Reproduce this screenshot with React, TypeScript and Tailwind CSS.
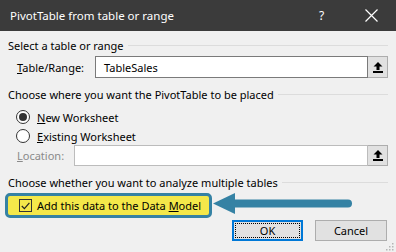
import React from 'react'

const FONT = { fontFamily: '"Noto Sans", "Open Sans", sans-serif' }

function UploadIcon() {
  return (
    <svg width="10" height="11" viewBox="0 0 10 11">
      <path d="M5 0 L9.5 4.5 L6.5 4.5 L6.5 8 L3.5 8 L3.5 4.5 L0.5 4.5 Z" fill="#000" />
      <rect x="0" y="9" width="10" height="2" fill="#000" />
    </svg>
  )
}

function SectionHeader({ label, className = '' }: { label: string; className?: string }) {
  return (
    <div className={`flex items-center h-[16px] gap-[4px] ${className}`}>
      <span className="whitespace-nowrap text-[#000]">{label}</span>
      <div className="flex-1 h-px bg-[#dcdcdc] mt-[1px]" />
    </div>
  )
}

function Radio({ checked }: { checked?: boolean }) {
  return (
    <div className="w-[14px] h-[14px] rounded-full border border-[#333] bg-white flex items-center justify-center">
      {checked && <div className="w-[8px] h-[8px] rounded-full bg-[#333]" />}
    </div>
  )
}

export default function App() {
  return (
    <div className="w-[396px] h-[252px] overflow-hidden text-[11px] leading-none" style={FONT}>

      {/* Title bar */}
      <div className="h-[31px] bg-[#3b3b3b] flex items-center pl-[10px] text-white">
        <span className="text-[11.5px] flex-1 whitespace-nowrap">PivotTable from table or range</span>
        <span className="text-[12px] w-[12px] mr-[34px]">?</span>
        <svg width="13" height="13" viewBox="0 0 13 13" className="mr-[18px]">
          <path d="M0.5 0.5 L12.5 12.5 M12.5 0.5 L0.5 12.5" stroke="#fff" strokeWidth="1.2" />
        </svg>
      </div>

      {/* Body */}
      <div className="h-[221px] bg-[#f0f0f0] px-[8px] flex flex-col relative">

        <SectionHeader label="Select a table or range" className="mt-[6px]" />

        {/* Table/Range */}
        <div className="flex items-center mt-[3px] h-[22px] pl-[9px]">
          <span className="w-[78px] whitespace-nowrap"><u>T</u>able/Range:</span>
          <div className="flex-1 h-full bg-white border border-[#7a7a7a] flex items-center pl-[8px]">
            TableSales
          </div>
          <div className="w-[20px] h-full bg-[#e1e1e1] border border-[#adadad] border-l-0 flex items-center justify-center">
            <UploadIcon />
          </div>
        </div>

        <SectionHeader label="Choose where you want the PivotTable to be placed" className="mt-[8px]" />

        {/* Radios */}
        <div className="flex items-center h-[16px] mt-[7px] pl-[8px] gap-[7px]">
          <Radio checked />
          <span><u>N</u>ew Worksheet</span>
        </div>
        <div className="flex items-center h-[16px] mt-[3px] pl-[8px] gap-[7px]">
          <Radio />
          <span><u>E</u>xisting Worksheet</span>
        </div>

        {/* Location */}
        <div className="flex items-center mt-[1px] h-[21px] pl-[9px]">
          <span className="w-[57px] text-[#8a8a8a]"><u>L</u>ocation:</span>
          <div className="flex-1 h-full bg-white border border-[#bcbcbc]" />
          <div className="w-[20px] h-full bg-[#e1e1e1] border border-[#adadad] border-l-0 flex items-center justify-center">
            <UploadIcon />
          </div>
        </div>

        <SectionHeader label="Choose whether you want to analyze multiple tables" className="mt-[8px]" />

        {/* Highlighted checkbox + arrow */}
        <div className="flex items-center mt-[3px] -ml-[3px] h-[25px]">
          <div className="w-[207px] h-[25px] rounded-[5px] border-[3px] border-[#3582a4] bg-[#f4e84a] flex items-center pl-[11px] gap-[5px]">
            <div className="w-[13px] h-[13px] border border-[#333] flex items-center justify-center">
              <svg width="9" height="8" viewBox="0 0 9 8">
                <path d="M0.8 4 L3.4 6.6 L8.4 0.8" stroke="#222" strokeWidth="1.2" fill="none" />
              </svg>
            </div>
            <span className="whitespace-nowrap">Add this data to the Data <u>M</u>odel</span>
          </div>
          <svg width="142" height="25" viewBox="0 0 142 25" className="-mt-[5px]">
            <path d="M1 12.5 L23 2 L23 23 Z" fill="#3582a4" />
            <line x1="22" y1="12.5" x2="136" y2="12.5" stroke="#3582a4" strokeWidth="8" strokeLinecap="round" />
          </svg>
        </div>

        {/* Buttons */}
        <div className="flex justify-end mt-[2px] pr-[1px] gap-[12px]">
          <div className="w-[71px] h-[21px] bg-[#e1e1e1] border-2 border-[#0078d7] p-[1px]">
            <div className="w-full h-full border border-dotted border-[#000] flex items-center justify-center">OK</div>
          </div>
          <div className="w-[72px] h-[21px] bg-[#e1e1e1] border border-[#adadad] flex items-center justify-center">Cancel</div>
        </div>

        {/* Resize grip */}
        <svg width="9" height="9" viewBox="0 0 9 9" className="absolute right-[2px] bottom-[1px]">
          <rect x="7" y="1" width="1.5" height="1.5" fill="#b5b5b5" />
          <rect x="4" y="4" width="1.5" height="1.5" fill="#b5b5b5" />
          <rect x="7" y="4" width="1.5" height="1.5" fill="#b5b5b5" />
          <rect x="1" y="7" width="1.5" height="1.5" fill="#b5b5b5" />
          <rect x="4" y="7" width="1.5" height="1.5" fill="#b5b5b5" />
          <rect x="7" y="7" width="1.5" height="1.5" fill="#b5b5b5" />
        </svg>
      </div>
    </div>
  )
}
